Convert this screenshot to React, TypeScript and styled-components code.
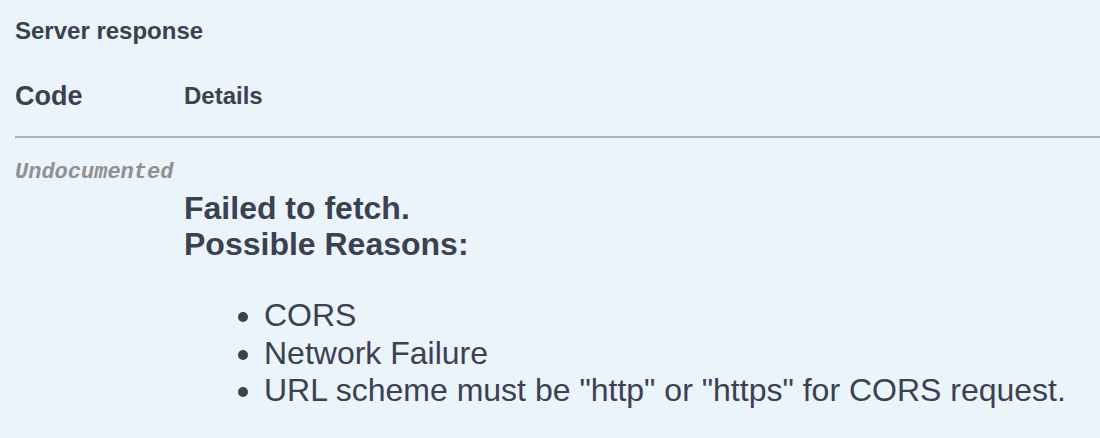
import React from "react";
import styled, { createGlobalStyle } from "styled-components";

const Global = createGlobalStyle`
  html, body {
    margin: 0;
    padding: 0;
    background: #ebf3fb;
  }
  body {
    font-family: "Liberation Sans", Arial, Helvetica, sans-serif;
    color: #3b4151;
  }
`;

const Page = styled.div`
  width: 1100px;
  height: 438px;
  overflow: hidden;
  background: #ebf3fb;
  padding: 17px 0 0 15px;
  box-sizing: border-box;
`;

const SectionTitle = styled.h4`
  margin: 0;
  font-size: 24px;
  line-height: 28px;
  font-weight: 700;
  color: #3b4151;
`;

const Table = styled.div`
  margin-top: 35px;
  display: grid;
  grid-template-columns: 169px 1fr;
`;

const HeaderRow = styled.div`
  grid-column: 1 / -1;
  display: grid;
  grid-template-columns: subgrid;
  align-items: start;
  padding-bottom: 24px;
  border-bottom: 2px solid #a9b1bd;
`;

const HeaderCell = styled.div<{ $big?: boolean }>`
  font-weight: 700;
  color: #3b4151;
  font-size: ${(p) => (p.$big ? "27px" : "24px")};
  line-height: ${(p) => (p.$big ? "32px" : "31px")};
`;

const BodyRow = styled.div`
  grid-column: 1 / -1;
  display: grid;
  grid-template-columns: subgrid;
  padding-top: 22px;
`;

const StatusCell = styled.div`
  font-family: "Liberation Mono", "Courier New", monospace;
  font-size: 22px;
  line-height: 25px;
  font-weight: 700;
  font-style: italic;
  color: #909090;
`;

const DescriptionCell = styled.div`
  padding-top: 30px;
`;

const ErrorHeading = styled.h5`
  margin: 0;
  font-size: 32px;
  line-height: 36px;
  font-weight: 700;
  color: #3b4151;
`;

const Reasons = styled.ul`
  margin: 35px 0 0;
  padding-left: 80px;
  font-size: 32px;
  line-height: 37.5px;
  font-weight: 400;
  color: #3b4151;
`;

const Reason = styled.li``;

export default function App() {
  return (
    <>
      <Global />
      <Page>
        <SectionTitle>Server response</SectionTitle>
        <Table>
          <HeaderRow>
            <HeaderCell $big>Code</HeaderCell>
            <HeaderCell>Details</HeaderCell>
          </HeaderRow>
          <BodyRow>
            <StatusCell>Undocumented</StatusCell>
            <DescriptionCell>
              <ErrorHeading>
                Failed to fetch.
                <br />
                Possible Reasons:
              </ErrorHeading>
              <Reasons>
                <Reason>CORS</Reason>
                <Reason>Network Failure</Reason>
                <Reason>URL scheme must be "http" or "https" for CORS request.</Reason>
              </Reasons>
            </DescriptionCell>
          </BodyRow>
        </Table>
      </Page>
    </>
  );
}
